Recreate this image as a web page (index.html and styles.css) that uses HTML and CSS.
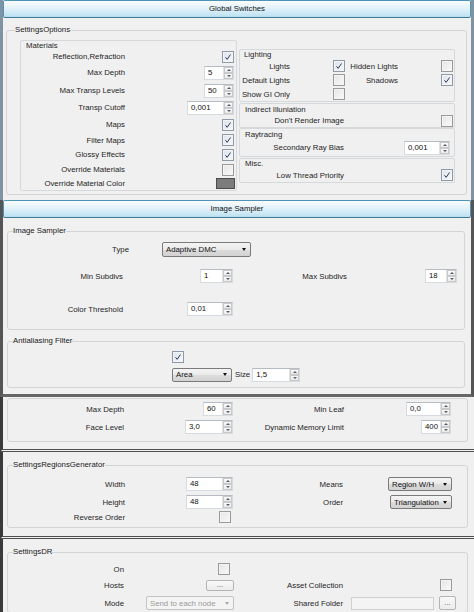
FILE: index.html
```html
<!DOCTYPE html>
<html>
<head>
<meta charset="utf-8">
<title>Settings</title>
<link rel="stylesheet" href="styles.css">
</head>
<body>
<div class="app">

  <section class="roll roll-1">
    <div class="rh">Global Switches</div>
    <div class="rb rb-1">
      <fieldset class="grp g-options">
        <legend>SettingsOptions</legend>
        <div class="gbody opt-body">
          <div class="sub materials">
            <div class="sub-title">Materials</div>
            <div class="mat-form">
              <span class="lbl">Reflection,Refraction</span>
              <span class="chk on"><svg viewBox="0 0 12 12"><path d="M3 6.3 L5 8.8 L9 3"/></svg></span>
              <span class="lbl">Max Depth</span>
              <span class="spin w30"><span class="val">5</span><span class="arr"><i class="up"></i><i class="dn"></i></span></span>
              <span class="lbl">Max Transp Levels</span>
              <span class="spin w30"><span class="val">50</span><span class="arr"><i class="up"></i><i class="dn"></i></span></span>
              <span class="lbl">Transp Cutoff</span>
              <span class="spin w47"><span class="val">0,001</span><span class="arr"><i class="up"></i><i class="dn"></i></span></span>
              <span class="lbl">Maps</span>
              <span class="chk on"><svg viewBox="0 0 12 12"><path d="M3 6.3 L5 8.8 L9 3"/></svg></span>
              <span class="lbl">Filter Maps</span>
              <span class="chk on"><svg viewBox="0 0 12 12"><path d="M3 6.3 L5 8.8 L9 3"/></svg></span>
              <span class="lbl">Glossy Effects</span>
              <span class="chk on"><svg viewBox="0 0 12 12"><path d="M3 6.3 L5 8.8 L9 3"/></svg></span>
              <span class="lbl">Override Materials</span>
              <span class="chk off"></span>
              <span class="lbl">Override Material Color</span>
              <span class="swatch"></span>
            </div>
          </div>
          <div class="rcol">
            <div class="sub lighting">
              <div class="sub-title">Lighting</div>
              <div class="light-form">
                <span class="lbl">Lights</span>
                <span class="chk on"><svg viewBox="0 0 12 12"><path d="M3 6.3 L5 8.8 L9 3"/></svg></span>
                <span class="lbl">Hidden Lights</span>
                <span class="chk off"></span>
                <span class="lbl">Default Lights</span>
                <span class="chk off"></span>
                <span class="lbl">Shadows</span>
                <span class="chk on"><svg viewBox="0 0 12 12"><path d="M3 6.3 L5 8.8 L9 3"/></svg></span>
                <span class="lbl">Show GI Only</span>
                <span class="chk off"></span>
              </div>
            </div>
            <div class="sub indirect">
              <div class="sub-title">Indirect Illuniation</div>
              <div class="one-form">
                <span class="lbl">Don't Render Image</span>
                <span class="chk off"></span>
              </div>
            </div>
            <div class="sub raytracing">
              <div class="sub-title">Raytracing</div>
              <div class="one-form">
                <span class="lbl">Secondary Ray Bias</span>
                <span class="spin w46 mr3"><span class="val">0,001</span><span class="arr"><i class="up"></i><i class="dn"></i></span></span>
              </div>
            </div>
            <div class="sub misc">
              <div class="sub-title">Misc.</div>
              <div class="one-form">
                <span class="lbl">Low Thread Priority</span>
                <span class="chk on"><svg viewBox="0 0 12 12"><path d="M3 6.3 L5 8.8 L9 3"/></svg></span>
              </div>
            </div>
          </div>
        </div>
      </fieldset>
    </div>
  </section>

  <section class="roll roll-2">
    <div class="rh">Image Sampler</div>
    <div class="rb rb-2">
      <fieldset class="grp g-sampler">
        <legend>Image Sampler</legend>
        <div class="gbody sampler-form">
          <span class="lbl type-lbl">Type</span>
          <span class="combo type-combo"><span class="ctext">Adaptive DMC</span><i class="carr"></i></span>
          <span class="lbl row-start">Min Subdivs</span>
          <span class="spin w33"><span class="val">1</span><span class="arr"><i class="up"></i><i class="dn"></i></span></span>
          <span class="lbl">Max Subdivs</span>
          <span class="spin w32"><span class="val">18</span><span class="arr"><i class="up"></i><i class="dn"></i></span></span>
          <span class="lbl row-start">Color Threshold</span>
          <span class="spin w46"><span class="val">0,01</span><span class="arr"><i class="up"></i><i class="dn"></i></span></span>
        </div>
      </fieldset>
      <fieldset class="grp g-aa">
        <legend>Antialiasing Filter</legend>
        <div class="gbody aa-body">
          <span class="chk on"><svg viewBox="0 0 12 12"><path d="M3 6.3 L5 8.8 L9 3"/></svg></span>
          <div class="aa-row">
            <span class="combo area-combo"><span class="ctext">Area</span><i class="carr"></i></span>
            <span class="lbl size-lbl">Size</span>
            <span class="spin w48"><span class="val">1,5</span><span class="arr"><i class="up"></i><i class="dn"></i></span></span>
          </div>
        </div>
      </fieldset>
    </div>
  </section>

  <section class="roll roll-3">
    <div class="rb rb-3">
      <div class="frame tree-form">
        <span class="lbl">Max Depth</span>
        <span class="spin w30"><span class="val">60</span><span class="arr"><i class="up"></i><i class="dn"></i></span></span>
        <span class="lbl">Min Leaf</span>
        <span class="spin w45"><span class="val">0,0</span><span class="arr"><i class="up"></i><i class="dn"></i></span></span>
        <span class="lbl">Face Level</span>
        <span class="spin w48"><span class="val">3,0</span><span class="arr"><i class="up"></i><i class="dn"></i></span></span>
        <span class="lbl">Dynamic Memory Limit</span>
        <span class="spin w30"><span class="val">400</span><span class="arr"><i class="up"></i><i class="dn"></i></span></span>
      </div>
    </div>
  </section>

  <section class="roll roll-4">
    <div class="rb rb-4">
      <fieldset class="grp g-regions">
        <legend>SettingsRegionsGenerator</legend>
        <div class="gbody regions-form">
          <span class="lbl">Width</span>
          <span class="spin w47"><span class="val">48</span><span class="arr"><i class="up"></i><i class="dn"></i></span></span>
          <span class="lbl">Means</span>
          <span class="combo means-combo"><span class="ctext">Region W/H</span><i class="carr"></i></span>
          <span class="lbl">Height</span>
          <span class="spin w47"><span class="val">48</span><span class="arr"><i class="up"></i><i class="dn"></i></span></span>
          <span class="lbl">Order</span>
          <span class="combo order-combo"><span class="ctext">Triangulation</span><i class="carr"></i></span>
          <span class="lbl">Reverse Order</span>
          <span class="chk off mr2"></span>
        </div>
      </fieldset>
    </div>
  </section>

  <section class="roll roll-5">
    <div class="rb rb-5">
      <fieldset class="grp g-dr">
        <legend>SettingsDR</legend>
        <div class="gbody dr-form">
          <span class="lbl">On</span>
          <span class="chk off mr4"></span>
          <span class="lbl row-start">Hosts</span>
          <span class="btn hosts-btn">...</span>
          <span class="lbl">Asset Collection</span>
          <span class="chk off mr4"></span>
          <span class="lbl">Mode</span>
          <span class="combo mode-combo disabled"><span class="ctext">Send to each node</span><i class="carr"></i></span>
          <span class="lbl">Shared Folder</span>
          <span class="folder"><span class="field"></span><span class="btn small-btn">...</span></span>
        </div>
      </fieldset>
    </div>
  </section>

</div>
</body>
</html>
```

FILE: styles.css
```css
* { box-sizing: border-box; }
html, body { margin: 0; padding: 0; }
body {
  width: 474px;
  height: 612px;
  overflow: hidden;
  background: #f0f0f0;
  font-family: "Liberation Sans", Arial, sans-serif;
  font-size: 7.8px;
  color: #1e1e1e;
}
.app { width: 474px; }

/* rollouts */
.roll { background: #f0f0f0; }
.roll-1 { border-left: 3px solid #7f93a0; border-right: 3px solid #7f93a0; }
.roll-2 { border-left: 3px solid #555; border-right: 3px solid #555; border-bottom: 3px solid #666; }
.roll-3 { border-left: 3px solid #3a3a3a; border-bottom: 3px double #505050; }
.roll-4 { border-left: 3px solid #3a3a3a; border-bottom: 3px double #505050; }
.roll-5 { border-left: 3px solid #3a3a3a; }

.rh {
  height: 18px;
  line-height: 16px;
  text-align: center;
  border: 1px solid #4f93b6;
  border-bottom-color: #3d7896;
  border-radius: 2px;
  background: linear-gradient(#fbfdfe, #e2f2fa 45%, #c3e4f3 90%, #b6dcee);
  color: #111;
}

.rb-1 { padding: 7px 4px 5px 3px; }
.rb-2 { padding: 8px 6px 6px 4px; }
.rb-3 { padding: 1px 6px 7px 4px; }
.rb-4 { padding: 8px 6px 8px 4px; }
.rb-5 { padding: 8px 6px 0 4px; height: 74px; }

/* group boxes */
.grp {
  margin: 0;
  padding: 0;
  min-width: 0;
  border: 1px solid #d2d5d8;
  border-radius: 3px;
}
.grp > legend {
  margin-left: 5px;
  padding: 0;
  height: 10px;
  line-height: 10px;
  color: #1a1a1a;
}
.g-options > legend { margin-left: 8px; }

.frame {
  border: 1px solid #d2d5d8;
  border-radius: 3px;
}

.sub {
  border: 1px solid #d6d9dc;
  border-radius: 2px;
}
.sub-title { line-height: 9px; height: 9px; padding-left: 5px; }

.lbl { justify-self: end; white-space: nowrap; }
.row-start { grid-column-start: 1; }

/* section 1 */
.opt-body {
  display: flex;
  align-items: flex-start;
  gap: 2px;
  padding: 5px 11px 3px 13px;
}
.materials { width: 217px; height: 151px; }
.mat-form {
  display: grid;
  grid-template-columns: 104px 109px;
  grid-template-rows: 13px 19px 17px 17px 17px 14px 15px 15px 13px;
  align-items: center;
}
.mat-form > :nth-child(even) { justify-self: end; }
.rcol { width: 216px; margin-top: 9px; display: flex; flex-direction: column; }
.lighting .sub-title { padding-left: 4px; }
.light-form {
  display: grid;
  grid-template-columns: 50px 55px 53px 55px;
  grid-template-rows: 14px 14px 14px;
  align-items: center;
}
.light-form > .chk { justify-self: end; }
.indirect { margin-top: 1px; }
.indirect .sub-title, .raytracing .sub-title { padding-top: 1px; height: 10px; }
.indirect .one-form { grid-template-rows: 13px; }
.raytracing .one-form { grid-template-rows: 17px; }
.misc { margin-top: 1px; }
.misc .one-form { grid-template-rows: 14px; }
.one-form {
  display: grid;
  grid-template-columns: 104px 109px;
  align-items: center;
}
.one-form > :nth-child(2) { justify-self: end; }

/* controls */
.chk {
  display: block;
  width: 12px;
  height: 12px;
  border: 1px solid #9a9a9a;
  background: linear-gradient(135deg, #e4e4e4, #fafafa);
  box-shadow: inset 0 0 0 1px #f4f4f4;
}
.chk.on { background: linear-gradient(135deg, #dde3ec, #f7f9fc); border-color: #8e9aa8; }
.chk svg { display: block; width: 10px; height: 10px; }
.chk path { fill: none; stroke: #2f3b55; stroke-width: 1.2; }

.spin {
  display: flex;
  height: 14px;
  background: #fff;
  border: 1px solid #d6dbe1;
  border-top-color: #b6bcc4;
}
.spin .val { flex: 1; padding-left: 3px; line-height: 12px; color: #111; }
.spin .arr {
  width: 10px;
  display: flex;
  flex-direction: column;
  border-left: 1px solid #e2e2e2;
  background: #f4f4f4;
}
.spin .arr i {
  flex: 1;
  position: relative;
  border: 1px solid #c9c9c9;
  background: linear-gradient(#fbfbfb, #e9e9e9);
}
.spin .arr i::after {
  content: "";
  position: absolute;
  left: 2px;
  top: 1px;
  border-left: 2px solid transparent;
  border-right: 2px solid transparent;
}
.spin .arr i.up::after { border-bottom: 2px solid #555d6e; }
.spin .arr i.dn::after { border-top: 2px solid #555d6e; }
.w30 { width: 30px; }
.w32 { width: 32px; }
.w33 { width: 33px; }
.w45 { width: 45px; }
.w46 { width: 46px; }
.w47 { width: 47px; }
.w48 { width: 48px; }
.mr2 { margin-right: 2px; }
.mr3 { margin-right: 3px; }
.mr4 { margin-right: 4px; }

.swatch {
  display: block;
  width: 19px;
  height: 11px;
  margin-right: -1px;
  background: #7c7c7c;
  border: 1px solid #4b4b4b;
}

.combo {
  display: flex;
  align-items: center;
  height: 15px;
  padding: 0 4px 0 3px;
  border: 1px solid #7a7a7a;
  border-radius: 2px;
  background: linear-gradient(#f4f4f4, #eaeaea 50%, #dcdcdc 51%, #d2d2d2);
  color: #111;
}
.combo .ctext { flex: 1; white-space: nowrap; overflow: hidden; }
.combo .carr {
  width: 0;
  height: 0;
  border-left: 2.5px solid transparent;
  border-right: 2.5px solid transparent;
  border-top: 3px solid #111;
}
.combo.disabled {
  border-color: #c4c4c4;
  background: #f4f4f4;
  color: #9a9a9a;
}
.combo.disabled .carr { border-top-color: #a8a8a8; }

.btn {
  display: flex;
  align-items: center;
  justify-content: center;
  border: 1px solid #b4b4b4;
  border-radius: 2px;
  background: linear-gradient(#f8f8f8, #ececec);
  color: #555;
  line-height: 1;
}

/* section 2 */
.sampler-form {
  display: grid;
  grid-template-columns: 115px 110px 114px 110px;
  grid-template-rows: 15px 38px 28px;
  align-items: center;
  padding: 6px 0 6px 0;
}
.sampler-form > .spin { justify-self: end; }
.type-lbl { margin-right: -6px; }
.type-combo { grid-column: 2 / span 2; justify-self: start; margin-left: 39px; width: 89px; }
.g-aa { margin-top: 6px; }
.aa-body { padding: 5px 0 6px 164px; }
.aa-body > .chk { margin-bottom: 5px; }
.aa-row { display: flex; align-items: center; height: 13px; }
.area-combo { width: 60px; height: 14px; }
.size-lbl { margin: 0 2px 0 3px; }

/* section 3 */
.tree-form {
  display: grid;
  grid-template-columns: 116px 109px 111px 107px;
  grid-template-rows: 18px 18px;
  align-items: center;
  padding: 1px 0 5px 0;
}
.tree-form > .spin { justify-self: end; }

/* section 4 */
.regions-form {
  display: grid;
  grid-template-columns: 117px 108px 110px 109px;
  grid-template-rows: 18px 18px 12px;
  align-items: center;
  padding: 5px 0 4px 0;
}
.regions-form > .spin, .regions-form > .combo, .regions-form > .chk { justify-self: end; }
.means-combo { width: 64px; height: 14px; }
.order-combo { width: 62px; height: 14px; }

/* section 5 */
.dr-form {
  display: grid;
  grid-template-columns: 116px 110px 109px 113px;
  grid-template-rows: 14px 18px 18px;
  align-items: center;
  padding: 5px 0 0 0;
}
.dr-form > .chk, .dr-form > .btn, .dr-form > .combo, .dr-form > .folder { justify-self: end; }
.hosts-btn { width: 28px; height: 11px; }
.mode-combo { width: 88px; height: 14px; }
.folder { display: flex; align-items: center; gap: 5px; }
.field { width: 83px; height: 13px; border: 1px solid #cfcfcf; background: #f4f4f4; }
.small-btn { width: 17px; height: 14px; }
```
